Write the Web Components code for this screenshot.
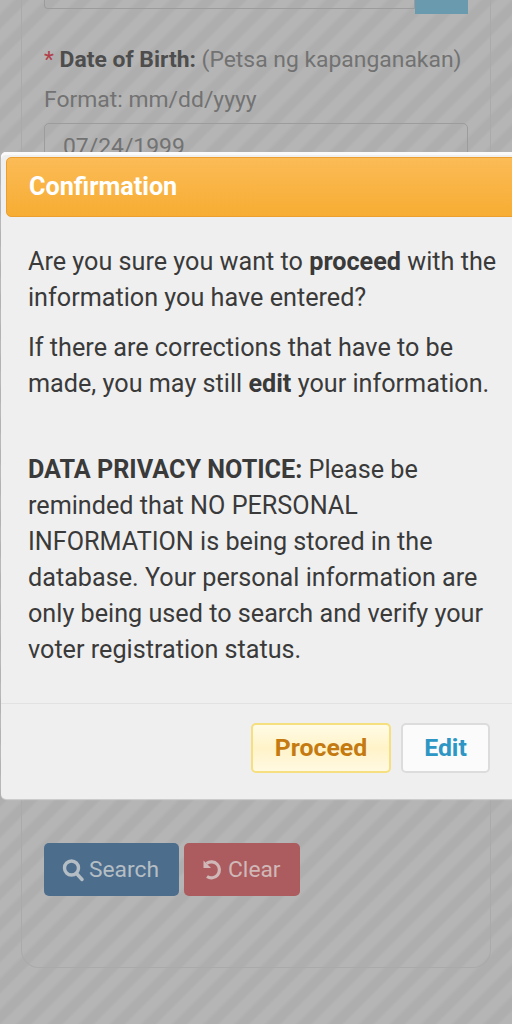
<!DOCTYPE html>
<html>
<head>
<meta charset="utf-8">
<style>
    html, body { margin: 0; padding: 0; height: 1024px; overflow: hidden; }
    body { font-family: Roboto, "Liberation Sans", sans-serif; }
</style>
</head>
<body>
<voter-form>
    <form-field-top></form-field-top>
    <date-field></date-field>
    <form-actions></form-actions>
</voter-form>
<confirm-dialog>
    <p>Are you sure you want to <b>proceed</b> with the information you have entered?</p>
    <p>If there are corrections that have to be made, you may still <b>edit</b> your information.</p>
    <p class="notice"><b>DATA PRIVACY NOTICE:</b> Please be reminded that NO PERSONAL INFORMATION is being stored in the database. Your personal information are only being used to search and verify your voter registration status.</p>
</confirm-dialog>
<script>
class VoterForm extends HTMLElement {
    constructor() {
        super();
        this.attachShadow({ mode: 'open' });
        this.shadowRoot.innerHTML = `
        <style>
            :host {
                display: block;
                height: 1024px;
                overflow: hidden;
                box-sizing: border-box;
                padding: 0 21px;
                background: repeating-linear-gradient(135deg, #b5b5b5 0 8px, #aeaeae 12px 19px, #b5b5b5 22px);
            }
            .panel {
                box-sizing: border-box;
                height: 968px;
                padding: 0 22px;
                border: 1px solid #aaa;
                border-top: 0;
                border-radius: 0 0 18px 18px;
            }
        </style>
        <div class="panel"><slot></slot></div>`;
    }
}

class FormFieldTop extends HTMLElement {
    constructor() {
        super();
        this.attachShadow({ mode: 'open' });
        this.shadowRoot.innerHTML = `
        <style>
            :host { display: flex; height: 14px; margin-bottom: 31px; }
            .input {
                flex: 1;
                height: 8px;
                border: 1px solid #9c9c9c;
                border-top: 0;
                border-radius: 0 0 0 4px;
            }
            .addon { width: 53px; background: #6a9aae; }
        </style>
        <div class="input"></div><div class="addon"></div>`;
    }
}

class DateField extends HTMLElement {
    constructor() {
        super();
        this.attachShadow({ mode: 'open' });
        this.shadowRoot.innerHTML = `
        <style>
            :host { display: block; color: #727272; font-size: 22.9px; line-height: 30px; }
            .req { color: #b2404a; }
            b { color: #4d4d4d; font-weight: 700; }
            .format { margin-top: 10px; }
            .input {
                box-sizing: border-box;
                height: 60px;
                margin-top: 8px;
                padding: 8px 18px;
                border: 1px solid #9c9c9c;
                border-radius: 5px;
                font-size: 22.9px;
            }
        </style>
        <div><span class="req">*</span> <b>Date of Birth:</b> (Petsa ng kapanganakan)</div>
        <div class="format">Format: mm/dd/yyyy</div>
        <div class="input">07/24/1999</div>`;
    }
}

class FormActions extends HTMLElement {
    constructor() {
        super();
        this.attachShadow({ mode: 'open' });
        this.shadowRoot.innerHTML = `
        <style>
            :host { display: flex; gap: 5px; margin-top: 660px; }
            .btn {
                box-sizing: border-box;
                display: flex;
                align-items: center;
                gap: 5px;
                height: 53px;
                padding: 0 18px;
                border-radius: 5px;
                color: #b4bec4;
                font-size: 22.8px;
            }
            .search { width: 135px; background: #4d6d8d; }
            .clear { width: 116px; background: #ac5c5e; color: #d0b8b8; }
            svg { flex: none; }
        </style>
        <div class="btn search">
            <svg width="22" height="24" viewBox="0 0 22 24" fill="none" stroke="currentColor" stroke-width="3.4">
                <circle cx="9.5" cy="10" r="7"/><path d="M14.5 15.5 20 21.5" stroke-linecap="round"/>
            </svg>Search
        </div>
        <div class="btn clear">
            <svg width="21" height="22" viewBox="0 0 21 22" fill="none" stroke="currentColor" stroke-width="3.2">
                <path d="M4.5 4.5A8 8 0 1 1 5 17.5"/><path d="M1.5 1.5V9h7.5z" fill="currentColor" stroke="none"/>
            </svg>Clear
        </div>`;
    }
}

class ConfirmDialog extends HTMLElement {
    constructor() {
        super();
        this.attachShadow({ mode: 'open' });
        this.shadowRoot.innerHTML = `
        <style>
            :host {
                position: absolute;
                left: 1px;
                top: 152px;
                box-sizing: border-box;
                width: 530px;
                height: 647px;
                padding: 5px 0 0 5px;
                border-radius: 5px;
                background: #efefef;
                box-shadow: inset 0 3px 0 #fafafa, 0 1px 1px #cfcfcf;
                color: #3a3a3a;
                font-size: 25.2px;
                line-height: 36px;
            }
            header {
                box-sizing: border-box;
                height: 60px;
                padding-left: 22px;
                border: 1px solid #ea9f2e;
                border-radius: 5px;
                background: linear-gradient(#fbbb56, #f7ad33);
                color: #fff;
                font-weight: 700;
                line-height: 57px;
            }
            .body { box-sizing: border-box; width: 494px; height: 486px; padding: 27px 0 0 22px; }
            ::slotted(p) { margin: 0 0 14px; }
            ::slotted(p.notice) { margin-top: 50px; }
            footer {
                display: flex;
                justify-content: flex-end;
                gap: 10px;
                margin-left: -5px;
                padding: 19px 41px 0 0;
                border-top: 1px solid #e2e2e2;
            }
            .btn {
                box-sizing: border-box;
                height: 50px;
                border-radius: 5px;
                font-weight: 700;
                font-size: 24.8px;
                line-height: 46px;
                text-align: center;
            }
            .proceed {
                width: 140px;
                border: 2px solid #f5df7e;
                background: linear-gradient(#fffbe6, #fff3c8 50%, #fff9e2);
                color: #c47a10;
            }
            .edit {
                width: 89px;
                border: 2px solid #dcdcdc;
                background: #fbfbfb;
                color: #2e96c4;
            }
        </style>
        <header>Confirmation</header>
        <div class="body"><slot></slot></div>
        <footer>
            <div class="btn proceed">Proceed</div>
            <div class="btn edit">Edit</div>
        </footer>`;
    }
}

customElements.define('voter-form', VoterForm);
customElements.define('form-field-top', FormFieldTop);
customElements.define('date-field', DateField);
customElements.define('form-actions', FormActions);
customElements.define('confirm-dialog', ConfirmDialog);
</script>
</body>
</html>
